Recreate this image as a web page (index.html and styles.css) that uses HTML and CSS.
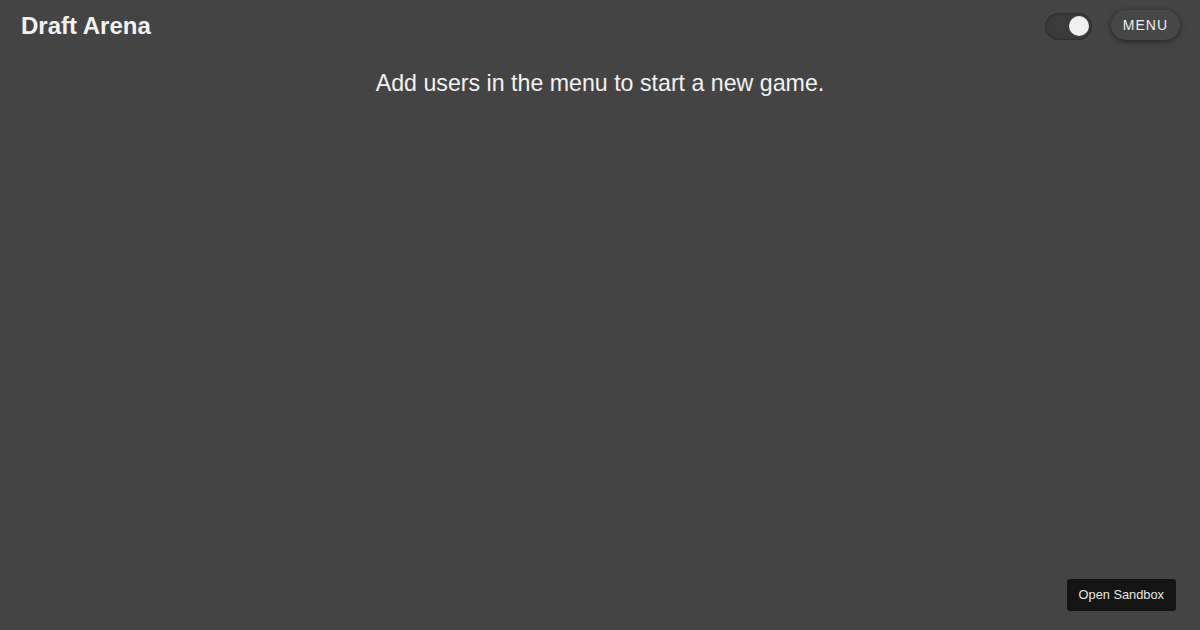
FILE: index.html
```html
<!DOCTYPE html>
<html>
<head>
<meta charset="utf-8">
<link rel="stylesheet" href="styles.css">
</head>
<body>
<header class="top">
  <h1 class="title">Draft Arena</h1>
  <div class="controls">
    <div class="toggle"><span class="knob"></span></div>
    <button class="menu">MENU</button>
  </div>
</header>
<main class="main">
  <p class="hint">Add users in the menu to start a new game.</p>
</main>
<div class="sandbox">Open Sandbox</div>
</body>
</html>
```
FILE: styles.css
```css
html, body {
  margin: 0;
  padding: 0;
  height: 100%;
}
body {
  background: #444444;
  color: #f2f2f2;
  font-family: "Liberation Sans", Arial, sans-serif;
  overflow: hidden;
}
.top {
  display: flex;
  align-items: center;
  justify-content: space-between;
  padding: 10px 20px 0 21px;
  height: 30px;
}
.title {
  margin: 0;
  font-size: 24px;
  font-weight: bold;
  color: #f2f2f2;
  line-height: 30px;
  position: relative;
  top: 1px;
}
.controls {
  display: flex;
  align-items: center;
  gap: 19px;
}
.toggle {
  width: 47px;
  height: 27px;
  border-radius: 14px;
  background: #3b3b3b;
  box-shadow: inset 0 0 3px rgba(0,0,0,0.5);
  display: flex;
  align-items: center;
  justify-content: flex-end;
  padding-right: 3px;
  box-sizing: border-box;
  margin-top: 2px;
}
.knob {
  width: 20px;
  height: 20px;
  border-radius: 50%;
  background: #f0f0f0;
}
.menu {
  font-family: "Liberation Sans", Arial, sans-serif;
  font-size: 14px;
  letter-spacing: 1px;
  color: #eeeeee;
  background: #474747;
  border: none;
  border-radius: 15px;
  height: 30px;
  padding: 0 12px 0 12px;
  box-shadow: 0 2px 6px rgba(0,0,0,0.35), 0 0 4px rgba(0,0,0,0.2);
}
.main {
  display: flex;
  justify-content: center;
}
.hint {
  margin: 28px 0 0 0;
  font-size: 23.2px;
  line-height: 30px;
  color: #f2f2f2;
}
.sandbox {
  position: absolute;
  right: 24px;
  bottom: 19px;
  background: #141414;
  color: #e8e8e8;
  font-size: 12.8px;
  height: 32px;
  line-height: 32px;
  padding: 0 12px;
  border-radius: 3px;
}
```
